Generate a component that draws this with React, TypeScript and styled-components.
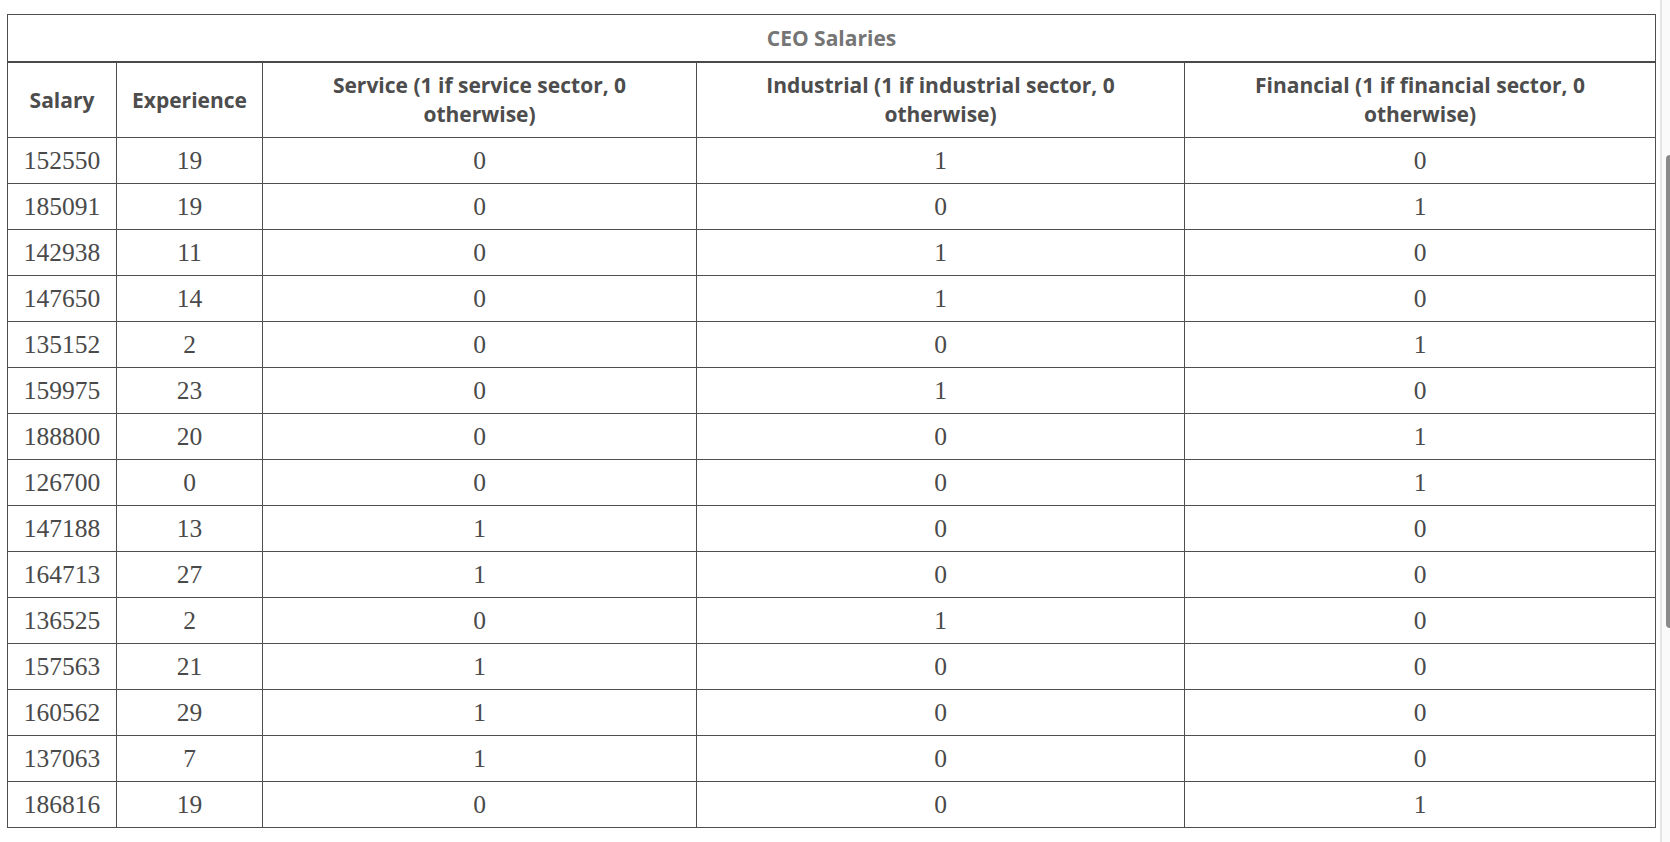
import React from "react";
import styled, { createGlobalStyle } from "styled-components";

const GlobalStyle = createGlobalStyle`
  html, body {
    margin: 0;
    padding: 0;
    background: #ffffff;
    overflow: hidden;
  }
`;

const Page = styled.div`
  display: flex;
  flex-direction: row;
  width: 1670px;
  height: 842px;
  background: #ffffff;
`;

const Content = styled.main`
  width: 1660px;
  padding: 14px 0 0 7px;
  box-sizing: border-box;
`;

const Rail = styled.div`
  width: 10px;
  height: 842px;
  box-sizing: border-box;
  border-left: 2px solid #e4e4e4;
  background: #fafafa;
  padding: 155px 0 0 4px;
  display: flex;
  flex-direction: column;
`;

const Thumb = styled.div`
  width: 4px;
  height: 473px;
  background: #8a8a8a;
  border-radius: 5px 0 0 5px;
`;

const Table = styled.table`
  width: 1648px;
  table-layout: fixed;
  border-collapse: collapse;
  border: 1px solid #4f4f4f;
  color: #4a4a4a;
`;

const CaptionCell = styled.th`
  height: 46px;
  padding: 0;
  border-bottom: 2px solid #4a4a4a;
  font-family: "Open Sans", "Liberation Sans", sans-serif;
  font-weight: 700;
  font-size: 21px;
  color: #757575;
  text-align: center;
  vertical-align: middle;
`;

const HeadCell = styled.th<{ $inset?: number }>`
  height: 74px;
  padding: 0 ${(p) => p.$inset ?? 8}px;
  border: 1px solid #4f4f4f;
  font-family: "Open Sans", "Liberation Sans", sans-serif;
  font-weight: 700;
  font-size: 21px;
  line-height: 29px;
  color: #4d4d4d;
  text-align: center;
  vertical-align: middle;
`;

const Cell = styled.td`
  height: 45px;
  padding: 0;
  border: 1px solid #4f4f4f;
  font-family: "Liberation Serif", "Times New Roman", serif;
  font-size: 25.5px;
  color: #4a4a4a;
  text-align: center;
  vertical-align: middle;
`;

const columns: { label: string; width: number; inset?: number }[] = [
  { label: "Salary", width: 109 },
  { label: "Experience", width: 146 },
  { label: "Service (1 if service sector, 0 otherwise)", width: 434, inset: 30 },
  { label: "Industrial (1 if industrial sector, 0 otherwise)", width: 488, inset: 30 },
  { label: "Financial (1 if financial sector, 0 otherwise)", width: 471, inset: 30 },
];

const rows: number[][] = [
  [152550, 19, 0, 1, 0],
  [185091, 19, 0, 0, 1],
  [142938, 11, 0, 1, 0],
  [147650, 14, 0, 1, 0],
  [135152, 2, 0, 0, 1],
  [159975, 23, 0, 1, 0],
  [188800, 20, 0, 0, 1],
  [126700, 0, 0, 0, 1],
  [147188, 13, 1, 0, 0],
  [164713, 27, 1, 0, 0],
  [136525, 2, 0, 1, 0],
  [157563, 21, 1, 0, 0],
  [160562, 29, 1, 0, 0],
  [137063, 7, 1, 0, 0],
  [186816, 19, 0, 0, 1],
];

const App = () => {
  return (
    <>
      <GlobalStyle />
      <Page>
        <Content>
          <Table>
            <colgroup>
              {columns.map((c) => (
                <col key={c.label} style={{ width: c.width }} />
              ))}
            </colgroup>
            <thead>
              <tr>
                <CaptionCell colSpan={5}>CEO Salaries</CaptionCell>
              </tr>
              <tr>
                {columns.map((c) => (
                  <HeadCell key={c.label} $inset={c.inset}>
                    {c.label}
                  </HeadCell>
                ))}
              </tr>
            </thead>
            <tbody>
              {rows.map((r, i) => (
                <tr key={i}>
                  {r.map((v, j) => (
                    <Cell key={j}>{v}</Cell>
                  ))}
                </tr>
              ))}
            </tbody>
          </Table>
        </Content>
        <Rail>
          <Thumb />
        </Rail>
      </Page>
    </>
  );
};

export default App;
